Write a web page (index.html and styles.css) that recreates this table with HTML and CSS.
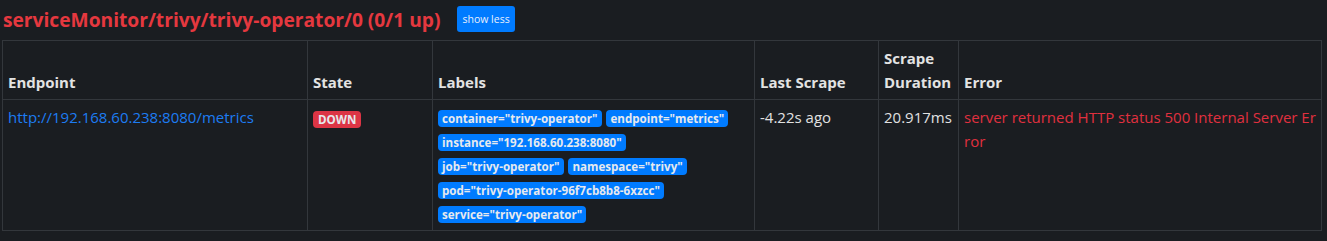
FILE: index.html
```html
<!DOCTYPE html>
<html>
<head>
<meta charset="utf-8">
<link rel="stylesheet" href="styles.css">
</head>
<body>
<div class="page">
  <div class="pool-head">
    <h2 class="pool-title">serviceMonitor/trivy/trivy-operator/0 (0/1 up)</h2>
    <button class="btn-toggle">show less</button>
  </div>
  <table class="targets">
    <colgroup>
      <col class="c-endpoint"><col class="c-state"><col class="c-labels"><col class="c-last"><col class="c-dur"><col class="c-err">
    </colgroup>
    <thead>
      <tr>
        <th>Endpoint</th>
        <th>State</th>
        <th>Labels</th>
        <th>Last Scrape</th>
        <th>Scrape Duration</th>
        <th>Error</th>
      </tr>
    </thead>
    <tbody>
      <tr>
        <td><a class="endpoint" href="#">http://192.168.60.238:8080/metrics</a></td>
        <td><span class="badge badge-down">DOWN</span></td>
        <td class="labels">
          <span class="badge badge-label">container="trivy-operator"</span>
          <span class="badge badge-label">endpoint="metrics"</span>
          <span class="badge badge-label">instance="192.168.60.238:8080"</span>
          <span class="badge badge-label">job="trivy-operator"</span>
          <span class="badge badge-label">namespace="trivy"</span>
          <span class="badge badge-label">pod="trivy-operator-96f7cb8b8-6xzcc"</span>
          <span class="badge badge-label">service="trivy-operator"</span>
        </td>
        <td>-4.22s ago</td>
        <td>20.917ms</td>
        <td class="error">server returned HTTP status 500 Internal Server Error</td>
      </tr>
    </tbody>
  </table>
</div>
</body>
</html>
```
FILE: styles.css
```css
html, body {
  margin: 0;
  background: #1a1d21;
}
body {
  font-family: "Open Sans", "Noto Sans", sans-serif;
  font-size: 15px;
  line-height: 24px;
  color: #e1e1e1;
}
.page {
  padding: 0 6px 0 2px;
}
.pool-head {
  display: flex;
  align-items: center;
  height: 40px;
  gap: 17px;
  padding-left: 1px;
}
.pool-title {
  margin: 0;
  font-size: 19.2px;
  font-weight: 700;
  color: #e5383f;
  line-height: 24px;
}
.btn-toggle {
  background: #007bff;
  color: #e8eefc;
  border: none;
  border-radius: 3px;
  font-family: inherit;
  font-size: 10.5px;
  height: 26px;
  padding: 0 5px;
  margin-top: -2px;
}
.targets {
  width: 1320px;
  border-collapse: collapse;
  table-layout: fixed;
}
.c-endpoint { width: 305px; }
.c-state { width: 125px; }
.c-labels { width: 322px; }
.c-last { width: 124px; }
.c-dur { width: 80px; }
.c-err { width: auto; }
.targets th, .targets td {
  border: 1px solid #33373c;
  padding: 5px 5px;
  text-align: left;
  vertical-align: top;
}
.targets th {
  vertical-align: bottom;
  font-weight: 700;
  color: #e3e3e3;
}
.endpoint {
  color: #1d7cf2;
  text-decoration: none;
}
.badge {
  display: inline-block;
  font-size: 11.6px;
  font-weight: 700;
  line-height: 17px;
  padding: 0 4px;
  border-radius: 4px;
  color: #e6e9ee;
  vertical-align: middle;
}
.badge-down {
  background: #dc3545;
  padding: 0 5px;
  vertical-align: top;
  margin-top: 6px;
}
.badge-label {
  background: #007bff;
  margin-right: 1px;
}
.labels {
  line-height: 24px;
}
.error {
  color: #e0303f;
  word-break: break-all;
}
```
